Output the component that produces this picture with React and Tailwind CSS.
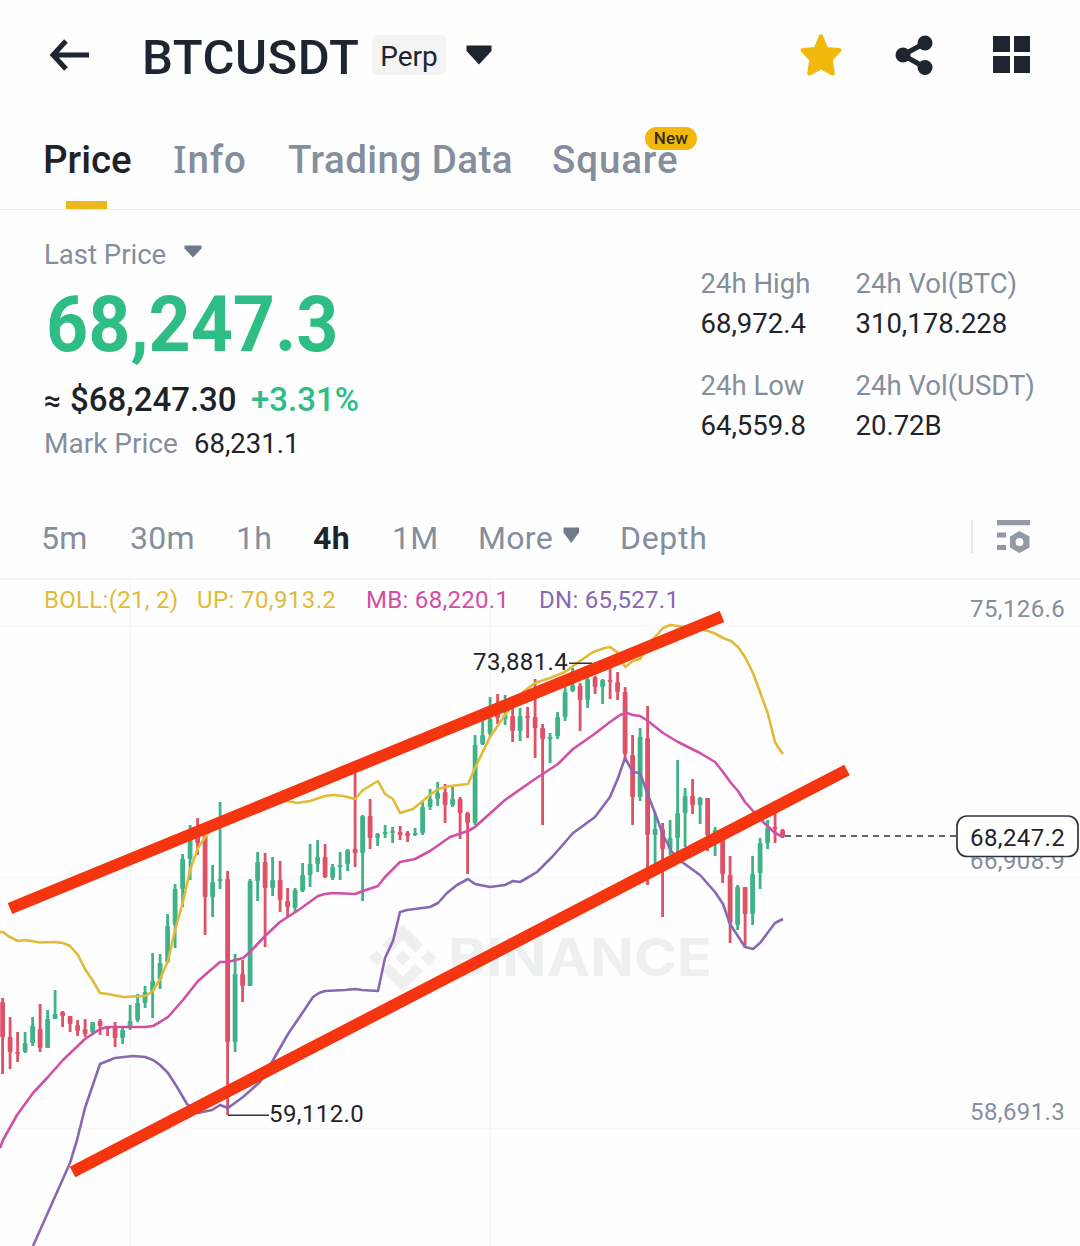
const UP = "#3fb387";
const DOWN = "#de5167";

// [type, high, low, bodyTop, bodyBottom]
const candles = [
  ["d", 998, 1074, 1002, 1037], ["d", 1017, 1069, 1037, 1052], ["d", 1032, 1062, 1052, 1054],
  ["u", 1032, 1053, 1043, 1052], ["u", 1017, 1046, 1026, 1043], ["d", 1004, 1052, 1029, 1048],
  ["u", 1010, 1048, 1019, 1048], ["u", 990, 1019, 1014, 1019], ["d", 1011, 1027, 1012, 1016],
  ["d", 1016, 1032, 1016, 1024], ["d", 1020, 1036, 1025, 1031], ["d", 1019, 1037, 1029, 1034],
  ["u", 1022, 1035, 1022, 1032], ["d", 1019, 1035, 1021, 1026], ["d", 1026, 1036, 1027, 1029],
  ["d", 1022, 1047, 1027, 1038], ["u", 1027, 1044, 1030, 1038], ["u", 1005, 1030, 1021, 1026],
  ["u", 994, 1022, 1003, 1020], ["u", 986, 1008, 992, 1003], ["u", 953, 1018, 981, 991],
  ["u", 954, 989, 963, 979], ["u", 914, 963, 926, 962], ["u", 884, 948, 889, 925],
  ["u", 854, 907, 859, 889], ["u", 825, 880, 837, 859], ["d", 818, 855, 827, 843],
  ["d", 830, 935, 832, 897], ["u", 865, 917, 882, 897], ["u", 802, 889, 879, 881],
  ["d", 871, 1115, 879, 1042], ["u", 954, 1052, 974, 1042], ["d", 960, 1002, 974, 986],
  ["u", 879, 986, 881, 986], ["u", 852, 901, 862, 881], ["d", 853, 947, 862, 888],
  ["u", 857, 896, 880, 888], ["d", 861, 912, 880, 900], ["d", 888, 917, 901, 907],
  ["u", 888, 913, 890, 908], ["u", 863, 892, 875, 891], ["u", 844, 887, 864, 875],
  ["u", 840, 872, 857, 864], ["d", 844, 878, 857, 877], ["u", 864, 880, 867, 878],
  ["u", 852, 880, 865, 867], ["u", 849, 871, 850, 864], ["d", 773, 867, 849, 853],
  ["u", 815, 901, 816, 853], ["d", 799, 849, 816, 838], ["u", 833, 846, 834, 838],
  ["u", 825, 838, 832, 834], ["u", 827, 843, 831, 833], ["d", 826, 840, 832, 835],
  ["d", 831, 842, 833, 836], ["u", 828, 836, 833, 835], ["u", 802, 835, 807, 833],
  ["u", 789, 810, 799, 807], ["u", 782, 806, 793, 799], ["d", 784, 823, 792, 805],
  ["u", 787, 807, 799, 805], ["d", 797, 839, 799, 813], ["d", 812, 874, 813, 823],
  ["u", 735, 825, 745, 823], ["u", 721, 745, 735, 744], ["u", 697, 737, 719, 734],
  ["d", 694, 724, 707, 718], ["u", 695, 725, 715, 719], ["d", 707, 742, 716, 731],
  ["u", 708, 741, 716, 731], ["d", 707, 738, 716, 718], ["d", 679, 758, 717, 728],
  ["d", 724, 825, 728, 739], ["u", 733, 763, 737, 739], ["u", 712, 739, 717, 736],
  ["u", 687, 721, 692, 717], ["u", 668, 692, 685, 691], ["d", 683, 731, 686, 700],
  ["u", 677, 708, 679, 700], ["d", 676, 694, 677, 687], ["u", 679, 704, 680, 687],
  ["d", 668, 699, 680, 682], ["d", 672, 700, 682, 692], ["d", 687, 760, 692, 754],
  ["d", 735, 825, 755, 797], ["u", 728, 801, 737, 797], ["d", 706, 885, 738, 835],
  ["u", 813, 876, 829, 835], ["d", 823, 917, 829, 849], ["u", 820, 855, 838, 849],
  ["u", 760, 852, 813, 838], ["u", 788, 847, 796, 813], ["d", 779, 814, 796, 805],
  ["u", 797, 824, 798, 805], ["d", 798, 851, 798, 835], ["u", 827, 856, 830, 840],
  ["d", 838, 883, 838, 874], ["d", 856, 943, 875, 923], ["u", 885, 930, 887, 925],
  ["d", 887, 948, 887, 914], ["u", 856, 925, 874, 914], ["u", 838, 889, 843, 873],
  ["u", 820, 849, 828, 843], ["d", 813, 843, 827, 829], ["d", 829, 838, 830, 837],
];

const upperBand =
  "0,932 3,932 8,936 18,941 25,940 40,942.5 55,942 63,943 70,946 78,955 85,969 93,981 100,993 108,994 123,997 145,996 153,991 160,979 168,961 175,930 183,902 190,870 198,848 208,833 240,812 270,802 287,801 297,803 310,801 325,796 333,795 343,796 355,799 363,790 378,781 385,794 393,799 400,813 413,809 430,795 438,789 450,786 468,784 475,768 490,737 505,715 523,692 535,683 550,678 565,672 580,661 593,652 605,648 610,647 617,652 625,667 633,661 640,659 647,647 655,637 663,628 670,625 678,626 693,628 708,631 714,633 723,638 731,641 738,647 745,657 753,673 760,692 768,714 775,742 778,747 783,754";
const middleBand =
  "0,1148 3,1140 17,1115 33,1093 48,1077 63,1060 85,1039 100,1029 107,1027 145,1027 153,1026 160,1022 168,1017 183,1000 198,981 220,962 228,962 243,958 250,952 265,936 280,922 300,909 318,896 325,894 333,893 355,894 363,891 378,886 385,877 400,862 415,859 430,851 450,837 468,831 475,827 505,800 535,779 558,764 573,749 593,735 610,722 620,715 627,713 633,715 640,716 648,721 663,733 678,742 700,753 715,762 723,772 731,783 738,791 745,802 753,811 760,819 775,833 783,837";
const lowerBand =
  "33,1246 70,1163 77,1140 85,1108 100,1064 115,1058 133,1056 145,1057 153,1060 160,1065 168,1073 177,1087 187,1104 198,1113 212,1110 220,1105 228,1108 243,1097 260,1082 272,1062 288,1034 303,1012 313,997 319,993 325,991 345,990 355,989 362,990 378,991 385,958 393,941 400,912 407,910 430,907 438,903 447,893 457,885 468,879 475,884 490,887 505,885 513,881 520,882 527,878 537,872 552,857 560,848 573,833 580,828 595,817 610,797 618,778 625,758 633,772 640,773 648,795 655,813 663,835 672,852 682,862 700,875 715,892 723,904 730,924 745,947 753,949 760,943 775,923 783,919";

const stats = [
  { label: "24h High", value: "68,972.4" },
  { label: "24h Vol(BTC)", value: "310,178.228" },
  { label: "24h Low", value: "64,559.8" },
  { label: "24h Vol(USDT)", value: "20.72B" },
];

const Header = () => (
  <header className="flex h-[110px] items-center pl-[49px] pr-[50px] text-[#1e2530]">
    <svg width="41" height="32" viewBox="0 0 41 32" fill="none" stroke="currentColor" strokeWidth="5">
      <path d="M17 2 L4 16 L17 30 M4 16 H40" />
    </svg>
    <h1 className="ml-[52px] w-[230px] whitespace-nowrap pt-[5px] text-[49px] font-medium tracking-[0.5px]">BTCUSDT</h1>
    <span className="flex h-[40px] w-[74px] items-center justify-center rounded-[5px] bg-[#f4f4f4] pt-[3px] text-[28px]">
      Perp
    </span>
    <svg className="ml-[20px]" width="26" height="20" viewBox="0 0 26 20" fill="currentColor">
      <path d="M0.5 0.5 H25.5 V6 L13 19.5 L0.5 6 Z" />
    </svg>
    <div className="ml-auto flex items-center">
      <svg width="44" height="44" viewBox="0 0 44 44" fill="#f0b90b" stroke="#f0b90b" strokeWidth="4.5" strokeLinejoin="round">
        <path d="M22 3.5 L27.2 16.2 L40.3 17.3 L31.4 26.4 L33.6 40.3 L22 34 L10.4 40.3 L12.6 26.4 L3.7 17.3 L16.8 16.2 Z" />
      </svg>
      <svg className="ml-[51px]" width="40" height="42" viewBox="0 0 40 42" fill="currentColor">
        <circle cx="9" cy="21" r="7.5" />
        <circle cx="31" cy="9" r="7.5" />
        <circle cx="31" cy="33.5" r="7.5" />
        <path d="M31 9 L9 21 L31 33.5" fill="none" stroke="currentColor" strokeWidth="5" />
      </svg>
      <div className="ml-[59px] grid grid-cols-2 gap-[4px] pb-[2px]">
        <i className="size-[16.5px] bg-current" />
        <i className="size-[16.5px] bg-current" />
        <i className="size-[16.5px] bg-current" />
        <i className="size-[16.5px] bg-current" />
      </div>
    </div>
  </header>
);

const Tabs = () => (
  <nav className="flex h-[100px] items-start whitespace-nowrap border-b border-[#e9eaec] pl-[43px] text-[38.5px] font-medium leading-[100px] text-[#848e9c]">
    <div className="relative w-[130px] text-[#1e2329]">
      Price
      <span className="absolute left-[23px] top-[91px] h-[8px] w-[41px] bg-[#ebb91c]" />
    </div>
    <div className="h-[99px] w-[115px] tracking-[0.8px]">
      <span className="font-['Noto_Sans',sans-serif] leading-none">I</span>nfo
    </div>
    <div className="w-[264px] tracking-[0.45px]">Trading Data</div>
    <div className="relative tracking-[0.9px]">
      Square
      <span className="absolute left-[93px] top-[17px] flex h-[23px] w-[52px] items-center justify-center rounded-full bg-[#f0b90b] text-[17px] leading-none tracking-[0.2px] text-[#332a10]">
        New
      </span>
    </div>
  </nav>
);

const Summary = () => (
  <section className="flex h-[286px] justify-between pl-[44px] text-[#1e2329]">
    <div className="whitespace-nowrap">
      <div className="mt-[28px] flex h-[34px] items-center text-[27.5px] text-[#848e9c]">
        Last Price
        <svg className="mb-[7px] ml-[18px]" width="18" height="13" viewBox="0 0 18 13" fill="#6f7a8b">
          <path d="M0.5 0.5 H17.5 V3.5 L9 12.5 L0.5 3.5 Z" />
        </svg>
      </div>
      <div className="ml-[1.5px] h-[106px] w-max origin-left scale-x-[0.955] text-[77px] font-bold leading-[107px] text-[#2ebd85]">
        68,247.3
      </div>
      <div className="h-[44px] text-[33px] font-medium leading-[44px]">
        <span className="inline-block w-[26px] text-[30px]">≈</span>
        <span className="inline-block w-[181px]">$68,247.30</span>
        <span className="text-[#2ebd85]">+3.31%</span>
      </div>
      <div className="h-[44px] text-[28px] leading-[44px]">
        <span className="inline-block w-[150px] text-[#848e9c]">Mark Price</span>
        <span className="text-[27.5px]">68,231.1</span>
      </div>
    </div>
    <div className="mt-[54px] grid h-[204px] w-[379.5px] grid-cols-[155px_224px] grid-rows-2 text-[27.5px] leading-[40px]">
      {stats.map((stat) => (
        <div key={stat.label}>
          <p className="text-[#848e9c]">{stat.label}</p>
          <p>{stat.value}</p>
        </div>
      ))}
    </div>
  </section>
);

const Timeframes = () => (
  <div className="flex h-[82px] items-center whitespace-nowrap pl-[41px] pr-[50px] pt-[1px] text-[32px] tracking-[0.3px] text-[#848e9c]">
    <span className="w-[89px]">5m</span>
    <span className="w-[106px]">30m</span>
    <span className="w-[77px]">1h</span>
    <span className="w-[79px] font-bold text-[#1e2329]">4h</span>
    <span className="w-[86px]">1M</span>
    <span className="w-[75px]">More</span>
    <svg className="mb-[5px] ml-[10px] mr-[40px]" width="17" height="17" viewBox="0 0 17 17" fill="#6f7a8b">
      <path d="M0.5 0.5 H16 V5.5 L8.2 16 L0.5 5.5 Z" />
    </svg>
    <span className="tracking-[0.7px]">Depth</span>
    <div className="ml-auto flex items-center pb-[3px]">
      <span className="h-[33px] w-[2px] bg-[#e6e8ea]" />
      <svg className="ml-[24px]" width="33" height="33" viewBox="0 0 33 33" fill="#929aa5">
        <path d="M0 0 H33 V5.3 H0 Z M0 12.5 H9 V17.5 H0 Z M0 25 H9 V30 H0 Z" />
        <path fillRule="evenodd" d="M22.5 11 L32.5 16.5 V27.5 L22.5 33 L13 27.5 V16.5 Z M22.5 18 A4 4 0 1 0 22.5 26 A4 4 0 1 0 22.5 18 Z" />
      </svg>
    </div>
  </div>
);

const Chart = () => (
  <section className="relative h-[668px] overflow-hidden text-[24px] tracking-[0.4px]">
    <svg className="block" width="1080" height="668" viewBox="0 578 1080 668">
      <path d="M0 579 H1080" stroke="#f0f2f3" strokeWidth="2" />
      <path d="M130 580 V1246 M490 580 V1246 M0 626 H1080 M0 877.5 H1080 M0 1128.5 H1080" stroke="#f8f8f9" strokeWidth="1.5" />

      {/* watermark */}
      <g fill="#eef0f0">
        <path
          transform="translate(369 924.5) scale(2.8)"
          d="M16.624 13.9202l2.7175 2.7154-7.353 7.353-7.353-7.352 2.7175-2.7164 4.6355 4.6595 4.6356-4.6595zm4.6366-4.6366L24 12l-2.7154 2.7164L18.5682 12l2.6924-2.7164zm-9.272.001l2.7163 2.6914-2.7164 2.7174v-.001L9.2721 12l2.7164-2.7154zm-9.2722-.001L5.4088 12l-2.6914 2.6924L0 12l2.7164-2.7164zM11.9885.0115l7.353 7.329-2.7174 2.7154-4.6356-4.6356-4.6355 4.6595-2.7174-2.7154 7.353-7.353z"
        />
        <text
          x="448"
          y="976"
          fontSize="52"
          textLength="264"
          lengthAdjust="spacingAndGlyphs"
          className="font-['Inter',sans-serif] font-bold tracking-normal"
        >
          BINANCE
        </text>
      </g>

      {candles.map(([type, high, low, top, bottom], i) => {
        const x = 2.6 + i * 7.5;
        const color = type === "u" ? UP : DOWN;
        return (
          <g key={i} fill={color}>
            <rect x={x - 1.4} y={high} width="2.8" height={low - high} />
            <rect x={x - 2.4} y={top} width="4.8" height={Math.max(bottom - top, 2)} rx="0.8" />
          </g>
        );
      })}

      <g fill="none" strokeWidth="2.6" strokeLinejoin="round">
        <polyline points={upperBand} stroke="#e2ba35" />
        <polyline points={middleBand} stroke="#d24fa8" />
        <polyline points={lowerBand} stroke="#8768b3" />
      </g>

      <path d="M228 1115.3 H269 M569 663.3 H592" stroke="#30343c" strokeWidth="1.6" />
      <path d="M785 836 H957" stroke="#30343c" strokeWidth="1.6" strokeDasharray="6 5" />

      {/* trend channel */}
      <path d="M10 908.5 L722 616.5 M72.5 1172 L847 770" stroke="#f5350f" strokeWidth="12" />

      <g fill="#1e2329">
        <text x="473" y="670">73,881.4</text>
        <text x="269" y="1122">59,112.0</text>
      </g>
      <g fill="#848e9c">
        <text x="970" y="617">75,126.6</text>
        <text x="970" y="869">66,908.9</text>
        <text x="970" y="1120">58,691.3</text>
      </g>
      <rect x="957" y="816" width="121" height="40.5" rx="10" fill="#fff" stroke="#30343c" strokeWidth="1.7" />
      <text x="970" y="846" fill="#1e2329">68,247.2</text>
    </svg>
    <div className="absolute left-[44px] top-[4px] flex whitespace-nowrap leading-[36px]">
      <span className="w-[153px] tracking-[0.3px] text-[#e0bb3b]">BOLL:(21, 2)</span>
      <span className="w-[169px] text-[#e0bb3b]">UP: 70,913.2</span>
      <span className="w-[173px] tracking-[0.3px] text-[#d24fa8]">MB: 68,220.1</span>
      <span className="tracking-[0.3px] text-[#8768b3]">DN: 65,527.1</span>
    </div>
  </section>
);

const App = () => {
  return (
    <main className="h-[1246px] w-[1080px] overflow-hidden bg-[#fefefe] font-['Roboto',sans-serif]">
      <Header />
      <Tabs />
      <Summary />
      <Timeframes />
      <Chart />
    </main>
  );
};

export default App;
